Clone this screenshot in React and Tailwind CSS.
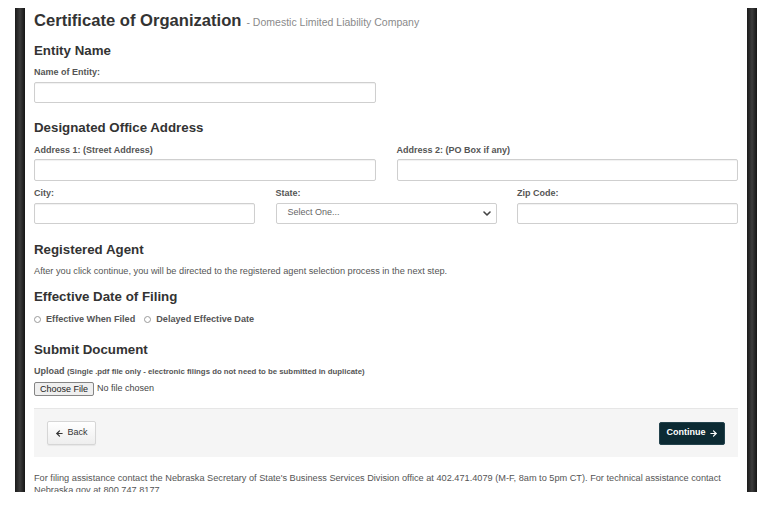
import { ArrowLeft, ArrowRight } from 'lucide-react'

// ── Small bits ──────────────────────────────────────────────────────────────
function Heading({ children, className = '' }) {
  return (
    <h2 className={`text-[13.3px] leading-[16px] font-bold text-[#333] ${className}`}>
      {children}
    </h2>
  )
}

function Label({ children, className = '' }) {
  return (
    <p className={`text-[9px] leading-[12px] font-bold text-[#555] ${className}`}>
      {children}
    </p>
  )
}

function Field({ h = 'h-[21px]', className = '' }) {
  return (
    <div
      className={`${h} w-full bg-white border border-[#cfcfcf] rounded-[2px] shadow-[inset_0_1px_1px_rgba(0,0,0,0.06)] ${className}`}
    />
  )
}

function Radio({ label }) {
  return (
    <span className="flex items-center gap-[5px]">
      <span className="w-[7px] h-[7px] rounded-full border border-[#9a9a9a] bg-white" />
      <span className="text-[9.15px] leading-[12px] font-bold text-[#555]">{label}</span>
    </span>
  )
}

function SideBar() {
  return (
    <div className="w-[10px] shrink-0 bg-linear-to-r from-[#1b1b1b] via-[#3c3c3c] to-[#161616]" />
  )
}

// ── Page ────────────────────────────────────────────────────────────────────
export default function App() {
  return (
    <div className="w-[768px] h-[505px] bg-white overflow-hidden font-['Liberation_Sans',Arial,sans-serif]">
      <div className="flex h-[484px] mt-[8px] ml-[15px] mr-[11px]">
        <SideBar />

        <main className="flex-1 min-w-0 px-[9px] overflow-hidden">
          {/* Title */}
          <div className="flex items-baseline mt-[3px] h-[20px]">
            <h1 className="text-[16.6px] leading-[20px] font-bold text-[#333]">
              Certificate of Organization
            </h1>
            <span className="ml-[5px] text-[10.5px] text-[#8a8a8a]">
              - Domestic Limited Liability Company
            </span>
          </div>

          {/* Entity Name */}
          <Heading className="mt-[11.5px]">Entity Name</Heading>
          <Label className="mt-[7px]">Name of Entity:</Label>
          <div className="grid grid-cols-2 gap-x-[21px] mt-[4.5px]">
            <Field />
          </div>

          {/* Designated Office Address */}
          <Heading className="mt-[16.5px]">Designated Office Address</Heading>
          <div className="grid grid-cols-2 gap-x-[21px] mt-[8px]">
            <div>
              <Label>Address 1: (Street Address)</Label>
              <Field h="h-[22px]" className="mt-[3px]" />
            </div>
            <div>
              <Label>Address 2: (PO Box if any)</Label>
              <Field h="h-[22px]" className="mt-[3px]" />
            </div>
          </div>

          <div className="grid grid-cols-3 gap-x-[20.5px] mt-[6.5px]">
            <div>
              <Label>City:</Label>
              <Field className="mt-[3.5px]" />
            </div>
            <div>
              <Label>State:</Label>
              <div className="mt-[3.5px] h-[21px] flex items-center justify-between pl-[11px] pr-[5px] bg-white border border-[#cfcfcf] rounded-[2px]">
                <span className="text-[9px] text-[#666]">Select One...</span>
                <svg width="8" height="5" viewBox="0 0 8 5" fill="none">
                  <path d="M1 1l3 3 3-3" stroke="#444" strokeWidth="1.6" strokeLinecap="round" strokeLinejoin="round" />
                </svg>
              </div>
            </div>
            <div>
              <Label>Zip Code:</Label>
              <Field className="mt-[3.5px]" />
            </div>
          </div>

          {/* Registered Agent */}
          <Heading className="mt-[18px]">Registered Agent</Heading>
          <p className="mt-[7px] text-[9.2px] leading-[12px] text-[#555]">
            After you click continue, you will be directed to the registered agent selection process in the next step.
          </p>

          {/* Effective Date */}
          <Heading className="mt-[12.5px]">Effective Date of Filing</Heading>
          <div className="mt-[8px] flex items-center gap-[9px]">
            <Radio label="Effective When Filed" />
            <Radio label="Delayed Effective Date" />
          </div>

          {/* Submit Document */}
          <Heading className="mt-[16.5px]">Submit Document</Heading>
          <p className="mt-[7px] text-[9px] leading-[12px] font-bold text-[#555]">
            Upload{' '}
            <span className="text-[7.8px]">
              (Single .pdf file only - electronic filings do not need to be submitted in duplicate)
            </span>
          </p>
          <div className="mt-[4.5px] flex items-center gap-[3px] h-[14px]">
            <button className="h-[14px] px-[5px] bg-[#efefef] border border-[#858585] rounded-[2px] text-[9px] leading-none text-[#222]">
              Choose File
            </button>
            <span className="text-[9px] text-[#444]">No file chosen</span>
          </div>

          {/* Actions */}
          <div className="mt-[12px] h-[49px] flex items-center justify-between px-[13px] bg-[#f5f5f5] border-t border-[#e6e6e6]">
            <button className="h-[24px] w-[49px] flex items-center justify-center gap-[3px] bg-linear-to-b from-white to-[#eeeeee] border border-[#d6d6d6] rounded-[2px] shadow-[0_1px_1px_rgba(0,0,0,0.06)] text-[9px] text-[#333]">
              <ArrowLeft size={9} strokeWidth={3.2} />
              Back
            </button>
            <button className="h-[23px] w-[66px] flex items-center justify-center gap-[3px] bg-[#0c2a33] border border-[#24434d] rounded-[2px] text-[9px] font-bold text-white">
              Continue
              <ArrowRight size={9} strokeWidth={3.2} />
            </button>
          </div>

          {/* Footer */}
          <p className="mt-[15px] text-[9.2px] leading-[12px] text-[#555]">
            For filing assistance contact the Nebraska Secretary of State's Business Services Division office at 402.471.4079 (M-F, 8am to 5pm CT). For technical assistance contact
            <br />
            Nebraska.gov at 800.747.8177
          </p>
        </main>

        <SideBar />
      </div>
    </div>
  )
}
